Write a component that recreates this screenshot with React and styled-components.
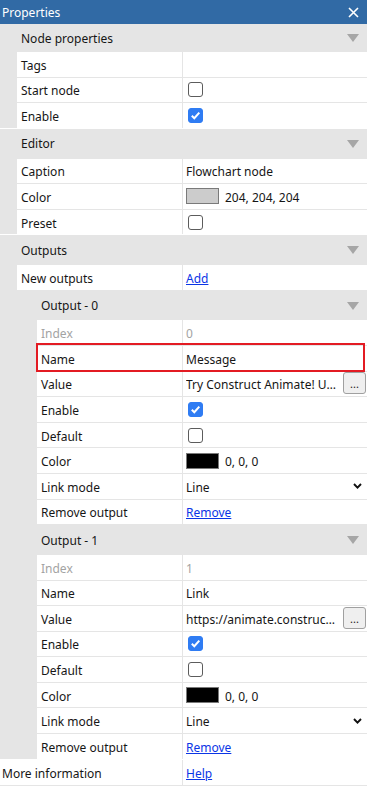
import React from "react";
import styled, { createGlobalStyle } from "styled-components";

const GlobalStyle = createGlobalStyle`
  *, *::before, *::after { box-sizing: border-box; }
  html, body { margin: 0; padding: 0; background: #fff; }
  body {
    font-family: "Noto Sans", "Open Sans", sans-serif;
    font-size: 12px;
    color: #161616;
  }
`;

const Panel = styled.div`
  width: 367px;
`;

const TitleBar = styled.div`
  height: 24px;
  background: #316aa5;
  color: #fff;
  display: flex;
  align-items: center;
  justify-content: space-between;
  padding: 0 8px 0 2px;
  font-size: 12px;
`;

const Section = styled.section`
  background: #e5e5e5;
`;

const GroupHeader = styled.div`
  height: ${(p) => p.$h}px;
  display: flex;
  align-items: center;
  justify-content: space-between;
  padding-left: ${(p) => p.$pad}px;
  padding-right: 8px;
`;

const Body = styled.div`
  padding-left: ${(p) => p.$indent}px;
`;

const Row = styled.div`
  position: relative;
  display: grid;
  grid-template-columns: ${(p) => p.$label}px 1fr;
  column-gap: 1px;
  height: 24.6px;
  margin-bottom: 1px;
  background: #e5e5e5;
`;

const Label = styled.div`
  background: #fff;
  display: flex;
  align-items: center;
  padding-left: ${(p) => p.$pad}px;
  padding-top: 2px;
  white-space: nowrap;
  color: ${(p) => (p.$muted ? "#a3a3a3" : "inherit")};
`;

const Value = styled.div`
  background: #fff;
  display: flex;
  align-items: center;
  padding-left: 3px;
  padding-top: 2px;
  min-width: 0;
  gap: 6px;
  color: ${(p) => (p.$muted ? "#a3a3a3" : "inherit")};
`;

const Text = styled.span`
  flex: 1;
  min-width: 0;
  overflow: hidden;
  white-space: nowrap;
  text-overflow: ellipsis;
`;

const Link = styled.a`
  color: #0b35e6;
  text-decoration: underline;
  cursor: pointer;
`;

const Box = styled.span`
  width: 15px;
  height: 15px;
  margin: -2px 0 0 2px;
  border-radius: 3px;
  border: 1px solid ${(p) => (p.$on ? "#2f7cf3" : "#5c5c5c")};
  background: ${(p) => (p.$on ? "#2f7cf3" : "#fff")};
  display: inline-flex;
  align-items: center;
  justify-content: center;
`;

const Swatch = styled.span`
  width: 33px;
  height: 16px;
  margin-top: -2px;
  border: 1px solid #7a7a7a;
  background: ${(p) => p.$c};
  flex: none;
`;

const DotsButton = styled.button`
  flex: none;
  width: 23px;
  height: 22px;
  margin: -3px 1px 0 0;
  padding: 0 0 4px;
  border: 1px solid #a0a0a0;
  border-radius: 3px;
  background: #efefef;
  color: #1b1b1b;
  font: inherit;
  font-size: 11px;
  display: flex;
  align-items: flex-end;
  justify-content: center;
  line-height: 1;
`;

const Chevron = styled.svg`
  margin: -2px 5px 0 auto;
  flex: none;
`;

const Highlight = styled.div`
  position: absolute;
  top: -3px;
  bottom: -1px;
  left: -1px;
  right: 2px;
  border: 2.5px solid #e31b23;
  pointer-events: none;
  z-index: 2;
`;

const Triangle = () => (
  <svg width="12" height="8" viewBox="0 0 12 8">
    <polygon points="0,0 12,0 6,8" fill="#a6a6a6" />
  </svg>
);

const CloseIcon = () => (
  <svg width="11" height="11" viewBox="0 0 11 11">
    <path d="M1 1L10 10M10 1L1 10" stroke="#fff" strokeWidth="1.6" />
  </svg>
);

const Checkbox = ({ on }) => (
  <Box $on={on}>
    {on && (
      <svg width="11" height="11" viewBox="0 0 11 11">
        <polyline points="1.8,5.8 4.3,8.2 9.3,2.6" fill="none" stroke="#fff" strokeWidth="2" />
      </svg>
    )}
  </Box>
);

const Group = ({ title, indent, pad, h = 29.75, children }) => (
  <Section>
    <GroupHeader $pad={pad} $h={h}>
      <span>{title}</span>
      <Triangle />
    </GroupHeader>
    <Body $indent={indent}>{children}</Body>
  </Section>
);

const Prop = ({ label, width, muted, highlight, children, pad = 4 }) => (
  <Row $label={width}>
    <Label $pad={pad} $muted={muted}>{label}</Label>
    <Value $muted={muted}>{children}</Value>
    {highlight && <Highlight />}
  </Row>
);

const ColorValue = ({ c, text }) => (
  <>
    <Swatch $c={c} />
    <span>{text}</span>
  </>
);

const Select = ({ value }) => (
  <>
    <span>{value}</span>
    <Chevron width="9" height="6" viewBox="0 0 9 6">
      <polyline points="1,1 4.5,4.6 8,1" fill="none" stroke="#111" strokeWidth="1.9" />
    </Chevron>
  </>
);

const outputs = [
  { index: "0", name: "Message", value: "Try Construct Animate! Use it to make animations and more", highlight: true },
  { index: "1", name: "Link", value: "https://animate.construct.net/" },
];

const OutputGroup = ({ o }) => (
  <Group title={`Output - ${o.index}`} indent={20} pad={24}>
    <Prop width={145} label="Index" muted>{o.index}</Prop>
    <Prop width={145} label="Name" highlight={o.highlight}>{o.name}</Prop>
    <Prop width={145} label="Value">
      <Text>{o.value}</Text>
      <DotsButton>...</DotsButton>
    </Prop>
    <Prop width={145} label="Enable"><Checkbox on /></Prop>
    <Prop width={145} label="Default"><Checkbox /></Prop>
    <Prop width={145} label="Color"><ColorValue c="#000" text="0, 0, 0" /></Prop>
    <Prop width={145} label="Link mode"><Select value="Line" /></Prop>
    <Prop width={145} label="Remove output"><Link>Remove</Link></Prop>
  </Group>
);

const MoreRow = styled(Row)`
  height: 26.2px;
  margin-bottom: 0;
  border-bottom: 1px solid #e5e5e5;
`;

export default function App() {
  return (
    <>
      <GlobalStyle />
      <Panel>
        <TitleBar>
          <span>Properties</span>
          <CloseIcon />
        </TitleBar>

        <Group title="Node properties" indent={17} pad={21} h={28}>
          <Prop width={165} label="Tags" />
          <Prop width={165} label="Start node"><Checkbox /></Prop>
          <Prop width={165} label="Enable"><Checkbox on /></Prop>
        </Group>

        <Group title="Editor" indent={17} pad={21}>
          <Prop width={165} label="Caption">Flowchart node</Prop>
          <Prop width={165} label="Color"><ColorValue c="#cccccc" text="204, 204, 204" /></Prop>
          <Prop width={165} label="Preset"><Checkbox /></Prop>
        </Group>

        <Group title="Outputs" indent={17} pad={21}>
          <Prop width={165} label="New outputs"><Link>Add</Link></Prop>
          {outputs.map((o) => (
            <OutputGroup key={o.index} o={o} />
          ))}
        </Group>

        <MoreRow $label={182}>
          <Label $pad={2}>More information</Label>
          <Value><Link>Help</Link></Value>
        </MoreRow>
      </Panel>
    </>
  );
}
